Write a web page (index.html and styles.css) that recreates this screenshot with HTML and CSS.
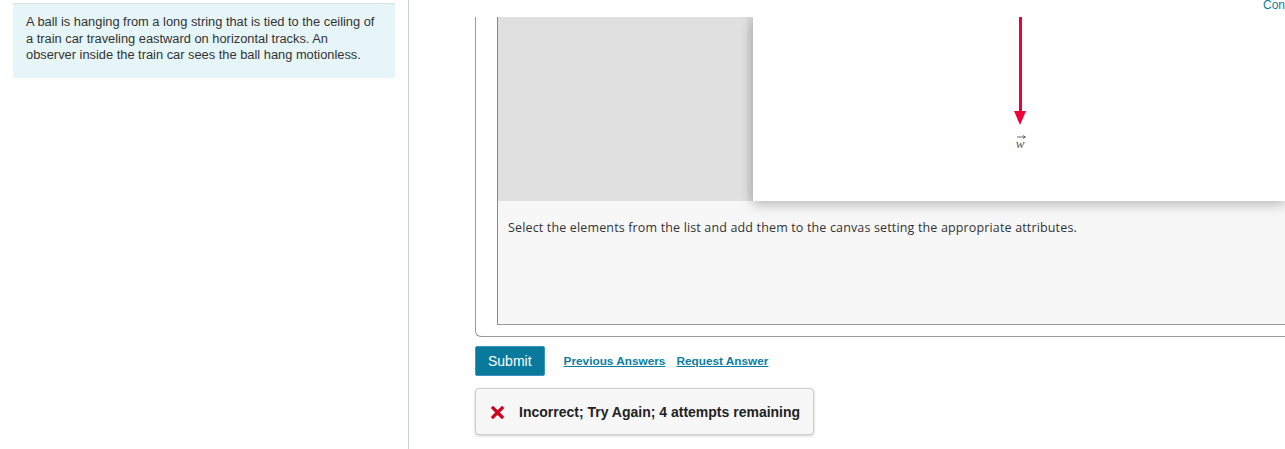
FILE: index.html
```html
<!DOCTYPE html>
<html lang="en">
<head>
  <meta charset="UTF-8" />
  <meta name="viewport" content="width=device-width, initial-scale=1.0" />
  <title>Free-body diagram</title>
  <link rel="stylesheet" href="styles.css">
</head>
<body>
  <div class="page">
    <aside class="sidebar">
      <div class="problem">
        A ball is hanging from a long string that is tied to the ceiling of
        a train car traveling eastward on horizontal tracks. An
        observer inside the train car sees the ball hang motionless.
      </div>
    </aside>

    <main class="main">
      <a class="top-link" href="#">Con</a>

      <div class="answer-box">
        <div class="tool">
          <div class="tool-top">
            <div class="palette"></div>
            <div class="splitter"></div>
            <div class="canvas">
              <div class="vector">
                <div class="vector-line"></div>
                <div class="vector-head"></div>
                <div class="vector-label">
                  <svg class="vec-arrow" width="9" height="4" viewBox="0 0 9 4">
                    <path d="M0 2 H8 M6 0.5 L8.5 2 L6 3.5" stroke="#555" stroke-width="0.9" fill="none" />
                  </svg>
                  <i>w</i>
                </div>
              </div>
            </div>
          </div>
          <div class="instructions">
            Select the elements from the list and add them to the canvas setting the appropriate attributes.
          </div>
        </div>
      </div>

      <div class="actions">
        <button class="submit">Submit</button>
        <a class="action-link" href="#">Previous Answers</a>
        <a class="action-link" href="#">Request Answer</a>
      </div>

      <div class="feedback">
        <svg class="x-icon" width="13" height="13" viewBox="0 0 13 13">
          <path d="M2 2 L11 11 M11 2 L2 11" stroke="#d0021b" stroke-width="3.2" stroke-linecap="square" />
        </svg>
        <span>Incorrect; Try Again; 4 attempts remaining</span>
      </div>
    </main>
  </div>
</body>
</html>
```

FILE: styles.css
```css
body {
  margin: 0;
  font-family: "Liberation Sans", Arial, sans-serif;
  color: #333;
  background: #fff;
  height: 449px;
  overflow: hidden;
}

.page {
  display: flex;
  height: 449px;
}

.sidebar {
  width: 382px;
  padding: 3px 13px 0 13px;
  border-right: 1px solid #c4d3de;
  flex-shrink: 0;
}

.problem {
  background: #e6f5f7;
  border-top: 1px solid #d4e3e8;
  padding: 10px 16px 14px 13px;
  font-size: 12.85px;
  line-height: 16.5px;
  color: #333;
}

.main {
  position: relative;
  flex: 1;
  padding: 17px 0 0 66px;
  min-width: 0;
}

.top-link {
  position: absolute;
  top: -2px;
  right: 0;
  width: 22px;
  overflow: hidden;
  white-space: nowrap;
  font-size: 12px;
  color: #0b7ea0;
  text-decoration: none;
}

.answer-box {
  border-left: 1px solid #999;
  border-bottom: 1px solid #999;
  border-bottom-left-radius: 6px;
  padding: 0 0 11px 21px;
}

.tool {
  border-left: 1px solid #888;
  border-bottom: 1px solid #999;
  background: #f7f7f7;
  height: 307px;
  overflow: hidden;
}

.tool-top {
  display: flex;
  height: 184px;
}

.palette {
  width: 249px;
  background: #e0e0e0;
}

.splitter {
  width: 6px;
  background: #d9d9d9;
}

.canvas {
  flex: 1;
  position: relative;
  background: #fff;
  box-shadow: 0 3px 12px rgba(0, 0, 0, 0.28);
}

.vector {
  position: absolute;
  left: 261px;
  top: 0;
  width: 12px;
  display: flex;
  flex-direction: column;
  align-items: center;
}

.vector-line {
  width: 3px;
  height: 94px;
  background: #f0003a;
}

.vector-head {
  width: 0;
  height: 0;
  border-left: 6px solid transparent;
  border-right: 6px solid transparent;
  border-top: 14px solid #f0003a;
}

.vector-label {
  position: relative;
  margin-top: 13px;
  font-family: "Liberation Serif", "Times New Roman", serif;
  font-size: 13px;
  color: #555;
  line-height: 12px;
}

.vec-arrow {
  position: absolute;
  left: 1px;
  top: -3px;
}

.instructions {
  padding: 18px 10px 0 10px;
  font-family: "Open Sans", sans-serif;
  font-size: 12.5px;
  letter-spacing: 0.15px;
  color: #333;
  background: #f7f7f7;
}

.actions {
  display: flex;
  align-items: center;
  margin-top: 9px;
  gap: 11px;
}

.submit {
  background: #0a7a9c;
  color: #fff;
  border: 1px solid #3d94c4;
  border-radius: 2px;
  font-family: "Liberation Sans", Arial, sans-serif;
  font-size: 14px;
  height: 30px;
  padding: 0 12px;
  margin-right: 8px;
}

.action-link {
  color: #0b7ea0;
  font-size: 11.8px;
  font-weight: bold;
  text-decoration: underline;
}

.feedback {
  display: inline-flex;
  align-items: center;
  gap: 15px;
  margin-top: 12px;
  padding: 15px 13px 14px 15px;
  background: #f7f7f7;
  border: 1px solid #ccc;
  border-radius: 4px;
  box-shadow: 0 1px 3px rgba(0, 0, 0, 0.2);
  font-size: 14px;
  font-weight: bold;
  color: #222;
}

.x-icon {
  display: block;
}
```
